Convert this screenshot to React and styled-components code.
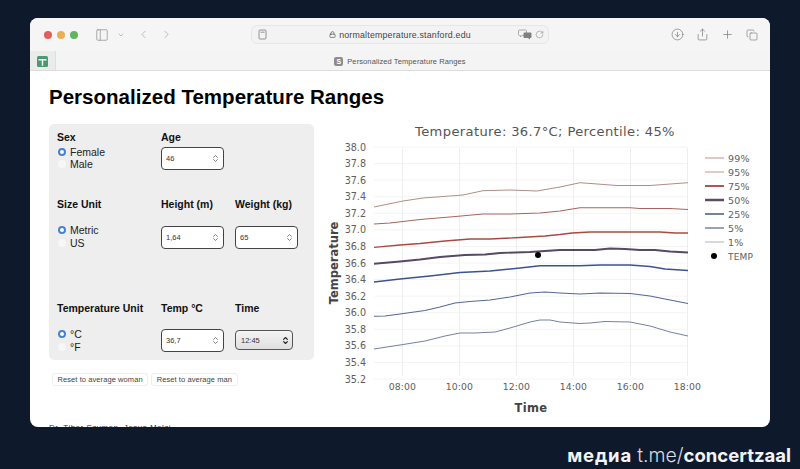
import React from 'react'
import styled, { createGlobalStyle } from 'styled-components'
import {
  PanelLeft, ChevronDown, ChevronLeft, ChevronRight, Lock, RotateCw,
  CircleArrowDown, Share, Plus, Copy, ChevronsUpDown,
} from 'lucide-react'

const GlobalStyle = createGlobalStyle`
  html, body { margin: 0; height: 100%; }
  body {
    background: #0e1a2c;
    font-family: "Liberation Sans", Arial, sans-serif;
    overflow: hidden;
  }
`

const Screen = styled.div`
  width: 800px;
  height: 469px;
  padding: 18px 30px 0;
  box-sizing: border-box;
  display: flex;
  flex-direction: column;
`

const Browser = styled.div`
  height: 409px;
  flex: none;
  background: #fff;
  border-radius: 8px;
  overflow: hidden;
  display: flex;
  flex-direction: column;
`

const Toolbar = styled.div`
  height: 33px;
  flex: none;
  background: #f5f5f5;
  display: grid;
  grid-template-columns: 221px 298px 1fr;
  align-items: center;
`

const ToolLeft = styled.div`
  display: flex;
  align-items: center;
  padding-left: 14px;
  color: #8b8b8b;
`

const Lights = styled.div`
  display: flex;
  gap: 5px;
  margin-right: 17px;
`

const Light = styled.span`
  width: 8px;
  height: 8px;
  border-radius: 50%;
  background: ${p => p.$color};
`

const NavGroup = styled.div`
  display: flex;
  gap: 10px;
  margin-left: 12px;
  color: #a2a2a2;
`

const Address = styled.div`
  height: 19px;
  box-sizing: border-box;
  border: 1px solid #e6e6e6;
  border-radius: 6px;
  background: #f3f3f3;
  display: flex;
  align-items: center;
  padding: 0 4px 0 5px;
  color: #777;
`

const AddressText = styled.div`
  flex: 1;
  display: flex;
  align-items: center;
  justify-content: center;
  gap: 3px;
  font-size: 8.8px;
  letter-spacing: 0.2px;
  color: #444;
  padding-left: 14px;
`

const ToolRight = styled.div`
  display: flex;
  justify-content: flex-end;
  align-items: center;
  gap: 12px;
  padding-right: 12px;
  color: #707070;
`

const TabBar = styled.div`
  height: 20px;
  box-sizing: border-box;
  flex: none;
  background: #f4f4f4;
  border-bottom: 1px solid #dcdcdc;
  display: flex;
`

const PinnedTab = styled.div`
  width: 25px;
  padding-top: 2px;
  background: #e9ecea;
  border-right: 1px solid #dedede;
  display: flex;
  align-items: center;
  justify-content: center;
`

const ActiveTab = styled.div`
  flex: 1;
  display: flex;
  align-items: center;
  justify-content: center;
  gap: 4px;
  font-size: 7.5px;
  letter-spacing: 0.1px;
  color: #555;
  padding: 2px 26px 0 0;
`

const Favicon = styled.span`
  width: 9px;
  height: 9px;
  border-radius: 2px;
  background: #8c8c8c;
  color: #fff;
  font-size: 7px;
  font-weight: bold;
  display: flex;
  align-items: center;
  justify-content: center;
`

const Page = styled.div`
  flex: 1;
  min-height: 0;
  overflow: hidden;
  padding: 0 0 0 19px;
  color: #000;
`

const Title = styled.h1`
  margin: 0;
  padding-top: 14px;
  font-size: 20.5px;
  line-height: 24px;
  font-weight: bold;
  letter-spacing: 0.02px;
`

const Content = styled.div`
  display: flex;
  align-items: flex-start;
`

const LeftColumn = styled.div`
  width: 265px;
  flex: none;
  padding-top: 15px;
`

const Panel = styled.div`
  height: 236px;
  box-sizing: border-box;
  background: #eee;
  border-radius: 5px;
  padding: 7px 8px 0;
  display: grid;
  grid-template-columns: 104px 74px 1fr;
  grid-template-rows: 67px 104px 58px;
`

const Field = styled.div`
  display: flex;
  flex-direction: column;
  align-items: flex-start;
  gap: ${p => p.$gap}px;
`

const Label = styled.div`
  font-size: 10.5px;
  line-height: 12px;
  font-weight: bold;
  color: #111;
`

const Radios = styled.div`
  display: flex;
  flex-direction: column;
`

const RadioRow = styled.label`
  display: flex;
  align-items: center;
  gap: 4px;
  height: ${p => p.$small ? 12 : 13}px;
  font-size: 10.5px;
  color: #222;
`

const Radio = styled.input.attrs({ type: 'radio', readOnly: true })`
  appearance: none;
  margin: 0 0 0 1px;
  width: 8px;
  height: 8px;
  border-radius: 50%;
  background: #f7f7f7;

  &:checked {
    background: #fff;
    border: 2.5px solid #4583d2;
    box-sizing: border-box;
  }
`

const NumberBox = styled.div`
  width: 63px;
  height: 23px;
  box-sizing: border-box;
  border: 1px solid #444;
  border-radius: 4px;
  background: #fff;
  display: flex;
  align-items: center;
  justify-content: space-between;
  padding: 0 3px 0 4px;
  color: #555;
`

const NumberInput = styled.input.attrs({ readOnly: true })`
  width: 40px;
  border: 0;
  padding: 0;
  outline: none;
  background: none;
  font: 7.5px "Liberation Sans", Arial, sans-serif;
  color: #333;
`

const SelectBox = styled.div`
  width: 58px;
  height: 20px;
  margin-top: 1px;
  box-sizing: border-box;
  border: 1px solid #555;
  border-radius: 4px;
  background: linear-gradient(#f4f4f4, #dfdfdf);
  display: flex;
  align-items: center;
  justify-content: space-between;
  padding: 0 2px 0 5px;
  font-size: 7.5px;
  color: #333;
`

const ButtonRow = styled.div`
  display: flex;
  gap: 3px;
  padding: 13px 0 0 3px;
`

const ResetButton = styled.button`
  height: 11px;
  padding: 0 4.5px;
  box-sizing: content-box;
  border: 1px solid #eee;
  border-radius: 3px;
  background: #fff;
  font: 7.5px "Liberation Sans", Arial, sans-serif;
  letter-spacing: 0.08px;
  color: #444;
`

const Credits = styled.p`
  margin: 0;
  padding-top: 37px;
  font-size: 8px;
  line-height: 10px;
  color: #333;
  letter-spacing: 0.5px;
`

const ChartWrap = styled.div`
  margin: 0 0 0 6px;
  padding-top: 9px;
`

const Caption = styled.div`
  flex: 1;
  display: flex;
  justify-content: flex-end;
  align-items: center;
  padding-top: 14px;
  margin-right: -21px;
  font-family: Inter, "Noto Sans", sans-serif;
  font-size: 18.5px;
  color: #f2f4f7;
`

const CaptionText = styled.div`
  white-space: pre;
`

const Strong = styled.span`
  font-weight: 700;
`

const Media = styled(Strong)`
  letter-spacing: 0.8px;
`

const Thin = styled.span`
  font-size: 19.5px;
  font-weight: 300;
  color: #d8dce2;
`

const X0 = 374
const X1 = 688
const yOf = v => 147 + (38 - v) * 82.86
const hours = ['08:00', '10:00', '12:00', '14:00', '16:00', '18:00']
const tickX = i => 402.5 + i * 57
const ticks = Array.from({ length: 15 }, (_, i) => (38 - i * 0.2).toFixed(1))

const curves = [
  { name: '99%', color: '#b08d85', legend: '#b9928c', width: 1, legendWidth: 1, pts: '374,207 403,201 423,198 463,195 483,190.7 510,190 537,191 560,187 580,182.7 617,185.5 650,185.5 688,182.7' },
  { name: '95%', color: '#a8655d', legend: '#c79a90', width: 1.1, legendWidth: 1.2, pts: '374,224 390,223 420,219.5 450,217 483,214 510,214 540,213 560,211 580,207.7 630,207.7 640,208.5 670,208.5 688,209.5' },
  { name: '75%', color: '#a84a42', legend: '#b0564e', width: 1.3, legendWidth: 1.8, pts: '374,247.3 400,245 420,243.5 445,241 470,239 490,239 520,237.5 545,236 560,234.5 572,233 590,232 660,232 675,233 688,233' },
  { name: '50%', color: '#574866', legend: '#5a4c66', width: 1.9, legendWidth: 2.4, pts: '374,263.7 400,261.5 420,259.5 440,257 465,255 485,254.5 500,253 530,252 560,250 595,250 610,248.5 625,249 640,250 655,250 670,251.5 688,252.5' },
  { name: '25%', color: '#3a5490', legend: '#42587f', width: 1.4, legendWidth: 1.6, pts: '374,282 400,279 430,276 460,272.5 490,271 500,270 520,268 540,265.7 580,265.7 600,265 630,265 650,266.5 665,269 688,270.5' },
  { name: '5%', color: '#566899', legend: '#7683a0', width: 1.1, legendWidth: 1.3, pts: '374,316.3 385,316 400,314 425,310.5 440,307 455,303 470,301.5 490,300 510,297 530,293 545,292 560,293 580,294 600,293 630,293.5 650,296 670,300 688,303.5' },
  { name: '1%', color: '#75819f', legend: '#aeb3bd', width: 1, legendWidth: 1, pts: '374,349 400,345 425,341 445,336 460,333 475,333 495,332 510,328 530,322 540,320 550,320 560,322 580,323.5 590,323 605,321.5 630,322 650,326 670,332 688,336' },
]

const chartFont = '"DejaVu Sans", Verdana, sans-serif'

// drawn in page coordinates, so the viewBox starts where the chart sits
const Chart = () => (
  <svg width="450" height="310" viewBox="320 118 450 310" fontFamily={chartFont}>
    <text x="545" y="136" textAnchor="middle" fontSize="13.1" letterSpacing="0.35" fill="#555">
      Temperature: 36.7°C; Percentile: 45%
    </text>
    {ticks.map(t => (
      <g key={t}>
        <line x1={X0} x2={X1} y1={yOf(+t)} y2={yOf(+t)} stroke="#f4f4f4" />
        <text x="366" y={yOf(+t) + 3.6} textAnchor="end" fontSize="9.6" fill="#5e5e5e">{t}</text>
      </g>
    ))}
    {hours.map((h, i) => (
      <g key={h}>
        <line x1={tickX(i)} x2={tickX(i)} y1="148" y2="376" stroke="#eeeeee" />
        <text x={tickX(i)} y="389.5" textAnchor="middle" fontSize="9.3" letterSpacing="0.1" fill="#5e5e5e">{h}</text>
      </g>
    ))}
    <text x="531" y="412" textAnchor="middle" fontSize="11.5" fontWeight="bold" letterSpacing="0.3" fill="#444">Time</text>
    <text transform="translate(338 263) rotate(-90)" textAnchor="middle" fontSize="11.5" fontWeight="bold" fill="#444">Temperature</text>
    {curves.map(c => (
      <polyline key={c.name} points={c.pts} fill="none" stroke={c.color} strokeWidth={c.width} strokeLinejoin="round" />
    ))}
    <circle cx="538" cy="255" r="3" fill="#000" />
    {curves.map((c, i) => (
      <g key={c.name}>
        <line x1="705" x2="724" y1={158 + i * 14} y2={158 + i * 14} stroke={c.legend} strokeWidth={c.legendWidth} />
        <text x="728" y={161.5 + i * 14} fontSize="9.5" letterSpacing="0.25" fill="#5e5e5e">{c.name}</text>
      </g>
    ))}
    <circle cx="714" cy="256" r="3" fill="#000" />
    <text x="728" y="259.5" fontSize="9" letterSpacing="0.2" fill="#5e5e5e">TEMP</text>
  </svg>
)

const ReaderIcon = () => (
  <svg width="11" height="11" viewBox="0 0 11 11" fill="none" stroke="#888" strokeWidth="0.9">
    <rect x="2" y="1" width="7" height="9" rx="1" />
    <path d="M3.5 3.2h4" />
  </svg>
)

const TranslateIcon = () => (
  <svg width="14" height="11" viewBox="0 0 14 11" fill="none">
    <path d="M1.5 1h6a1 1 0 0 1 1 1v3.5a1 1 0 0 1-1 1H4L2.5 8V6.500h-1a1 1 0 0 1-1-1V2a1 1 0 0 1 1-1z" stroke="#999" strokeWidth="0.8" />
    <path d="M6.500 3.500h6a1 1 0 0 1 1 1V8a1 1 0 0 1-1 1H12v1.500L10 9H6.500a1 1 0 0 1-1-1V4.500a1 1 0 0 1 1-1z" fill="#808080" />
  </svg>
)

const SheetIcon = () => (
  <svg width="11" height="11" viewBox="0 0 11 11">
    <rect width="11" height="11" rx="1.5" fill="#4a9a70" />
    <path d="M1.500 3.800h8M5.500 3.800v6" stroke="#fff" strokeWidth="1.400" fill="none" />
  </svg>
)

const Stepper = () => <ChevronsUpDown size={9} strokeWidth={2} />

const NumberField = ({ value }) => (
  <NumberBox>
    <NumberInput value={value} />
    <Stepper />
  </NumberBox>
)

const RadioGroup = ({ name, options, small }) => (
  <Radios>
    {options.map((o, i) => (
      <RadioRow key={o} $small={small}>
        <Radio name={name} defaultChecked={i === 0} />
        {o}
      </RadioRow>
    ))}
  </Radios>
)

export default function App() {
  return (
    <Screen>
      <GlobalStyle />
      <Browser>
        <Toolbar>
          <ToolLeft>
            <Lights>
              <Light $color="#e0605a" />
              <Light $color="#e8b04e" />
              <Light $color="#62b45e" />
            </Lights>
            <PanelLeft size={14} strokeWidth={1.2} />
            <ChevronDown size={8} strokeWidth={1.6} style={{ marginLeft: 8 }} />
            <NavGroup>
              <ChevronLeft size={13} strokeWidth={1.3} />
              <ChevronRight size={13} strokeWidth={1.3} />
            </NavGroup>
          </ToolLeft>
          <Address>
            <ReaderIcon />
            <AddressText>
              <Lock size={7} strokeWidth={2} />
              normaltemperature.stanford.edu
            </AddressText>
            <TranslateIcon />
            <RotateCw size={9} strokeWidth={1.2} style={{ marginLeft: 3 }} />
          </Address>
          <ToolRight>
            <CircleArrowDown size={13} strokeWidth={1.2} />
            <Share size={13} strokeWidth={1.2} />
            <Plus size={13} strokeWidth={1.2} />
            <Copy size={12} strokeWidth={1.2} />
          </ToolRight>
        </Toolbar>
        <TabBar>
          <PinnedTab><SheetIcon /></PinnedTab>
          <ActiveTab>
            <Favicon>S</Favicon>
            Personalized Temperature Ranges
          </ActiveTab>
        </TabBar>
        <Page>
          <Title>Personalized Temperature Ranges</Title>
          <Content>
            <LeftColumn>
              <Panel>
                <Field $gap={3}>
                  <Label>Sex</Label>
                  <RadioGroup name="sex" options={['Female', 'Male']} small />
                </Field>
                <Field $gap={4}>
                  <Label>Age</Label>
                  <NumberField value="46" />
                </Field>
                <div />
                <Field $gap={13}>
                  <Label>Size Unit</Label>
                  <RadioGroup name="size" options={['Metric', 'US']} />
                </Field>
                <Field $gap={16}>
                  <Label>Height (m)</Label>
                  <NumberField value="1,64" />
                </Field>
                <Field $gap={16}>
                  <Label>Weight (kg)</Label>
                  <NumberField value="65" />
                </Field>
                <Field $gap={13}>
                  <Label>Temperature Unit</Label>
                  <RadioGroup name="unit" options={['°C', '°F']} />
                </Field>
                <Field $gap={15}>
                  <Label>Temp °C</Label>
                  <NumberField value="36,7" />
                </Field>
                <Field $gap={15}>
                  <Label>Time</Label>
                  <SelectBox>
                    12:45
                    <ChevronsUpDown size={9} strokeWidth={3} color="#222" />
                  </SelectBox>
                </Field>
              </Panel>
              <ButtonRow>
                <ResetButton>Reset to average woman</ResetButton>
                <ResetButton>Reset to average man</ResetButton>
              </ButtonRow>
              <Credits>Dr. Tibor Szymon, Jesus Melzi</Credits>
            </LeftColumn>
            <ChartWrap>
              <Chart />
            </ChartWrap>
          </Content>
        </Page>
      </Browser>
      <Caption>
        <CaptionText>
          <Media>медиа</Media> <Thin>t.me/</Thin><Strong>concertzaal</Strong>
        </CaptionText>
      </Caption>
    </Screen>
  )
}
